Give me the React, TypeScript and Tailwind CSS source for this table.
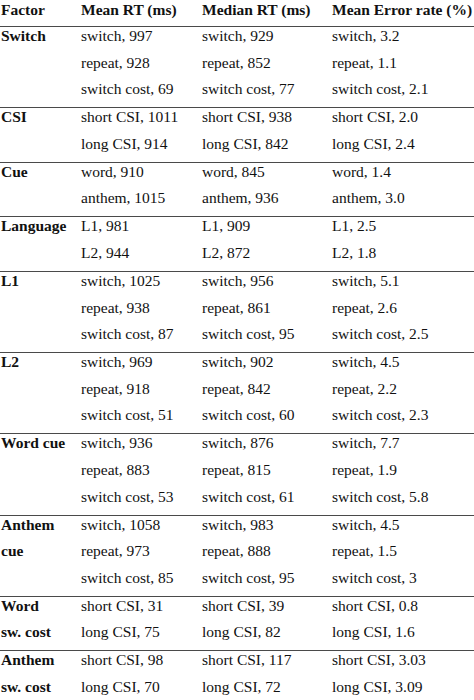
type Group = {
	factor: string[]
	mean: string[]
	median: string[]
	error: string[]
}

const groups: Group[] = [
	{
		factor: ['Switch'],
		mean: ['switch, 997', 'repeat, 928', 'switch cost, 69'],
		median: ['switch, 929', 'repeat, 852', 'switch cost, 77'],
		error: ['switch, 3.2', 'repeat, 1.1', 'switch cost, 2.1'],
	},
	{
		factor: ['CSI'],
		mean: ['short CSI, 1011', 'long CSI, 914'],
		median: ['short CSI, 938', 'long CSI, 842'],
		error: ['short CSI, 2.0', 'long CSI, 2.4'],
	},
	{
		factor: ['Cue'],
		mean: ['word, 910', 'anthem, 1015'],
		median: ['word, 845', 'anthem, 936'],
		error: ['word, 1.4', 'anthem, 3.0'],
	},
	{
		factor: ['Language'],
		mean: ['L1, 981', 'L2, 944'],
		median: ['L1, 909', 'L2, 872'],
		error: ['L1, 2.5', 'L2, 1.8'],
	},
	{
		factor: ['L1'],
		mean: ['switch, 1025', 'repeat, 938', 'switch cost, 87'],
		median: ['switch, 956', 'repeat, 861', 'switch cost, 95'],
		error: ['switch, 5.1', 'repeat, 2.6', 'switch cost, 2.5'],
	},
	{
		factor: ['L2'],
		mean: ['switch, 969', 'repeat, 918', 'switch cost, 51'],
		median: ['switch, 902', 'repeat, 842', 'switch cost, 60'],
		error: ['switch, 4.5', 'repeat, 2.2', 'switch cost, 2.3'],
	},
	{
		factor: ['Word cue'],
		mean: ['switch, 936', 'repeat, 883', 'switch cost, 53'],
		median: ['switch, 876', 'repeat, 815', 'switch cost, 61'],
		error: ['switch, 7.7', 'repeat, 1.9', 'switch cost, 5.8'],
	},
	{
		factor: ['Anthem', 'cue'],
		mean: ['switch, 1058', 'repeat, 973', 'switch cost, 85'],
		median: ['switch, 983', 'repeat, 888', 'switch cost, 95'],
		error: ['switch, 4.5', 'repeat, 1.5', 'switch cost, 3'],
	},
	{
		factor: ['Word', 'sw. cost'],
		mean: ['short CSI, 31', 'long CSI, 75'],
		median: ['short CSI, 39', 'long CSI, 82'],
		error: ['short CSI, 0.8', 'long CSI, 1.6'],
	},
	{
		factor: ['Anthem', 'sw. cost'],
		mean: ['short CSI, 98', 'long CSI, 70'],
		median: ['short CSI, 117', 'long CSI, 72'],
		error: ['short CSI, 3.03', 'long CSI, 3.09'],
	},
]

const cols = 'grid grid-cols-[80px_121px_130px_1fr] pl-[1px]'

function Cell({ lines, bold }: { lines: string[]; bold?: boolean }) {
	return (
		<div className={`flex flex-col gap-[9.6px] ${bold ? 'font-bold' : ''}`}>
			{lines.map((l, i) => (
				<div key={i} className="leading-[17px] whitespace-nowrap">
					{l}
				</div>
			))}
		</div>
	)
}

export default function App() {
	return (
		<div className="w-[474px] h-[700px] overflow-hidden bg-white text-[#111] text-[15.5px] font-['Liberation_Serif','Times_New_Roman',serif]">
			{/* header */}
			<div className={`${cols} pt-[1px] pb-[8px] font-bold leading-[17px] whitespace-nowrap`}>
				<div>Factor</div>
				<div>Mean RT (ms)</div>
				<div>Median RT (ms)</div>
				<div>Mean Error rate (%)</div>
			</div>
			{groups.map((g, i) => (
				<div key={i} className={`${cols} border-t border-[#4a4a4a] pb-[10px]`}>
					<Cell lines={g.factor} bold />
					<Cell lines={g.mean} />
					<Cell lines={g.median} />
					<Cell lines={g.error} />
				</div>
			))}
		</div>
	)
}
